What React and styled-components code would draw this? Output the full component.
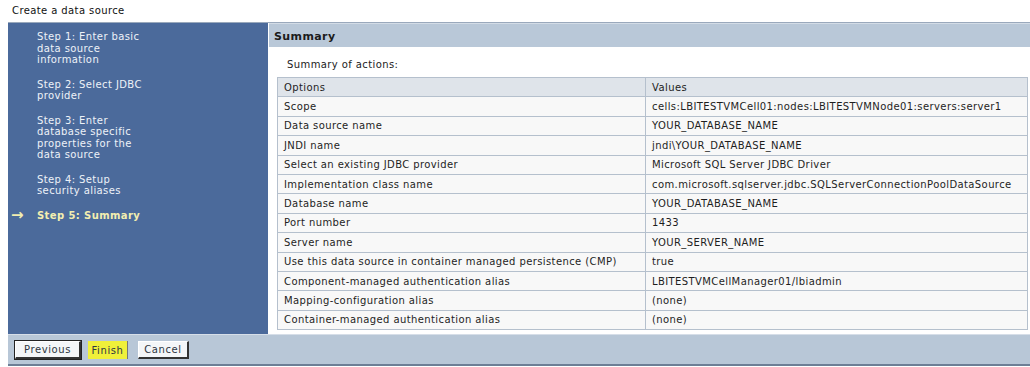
import React from "react";
import styled, { createGlobalStyle } from "styled-components";

const Global = createGlobalStyle`
  html, body { margin: 0; padding: 0; background: #ffffff; }
  body { font-family: "DejaVu Sans", Verdana, sans-serif; color: #1a1a1a; letter-spacing: 0.4px; }
  * { box-sizing: border-box; }
`;

const Page = styled.div`
  width: 1030px;
  height: 367px;
  overflow: hidden;
  padding: 0 0 0 8px;
`;

const Title = styled.div`
  font-size: 10px;
  height: 22px;
  line-height: 22px;
  padding-left: 4px;
  color: #111;
`;

const Frame = styled.div`
  width: 1024px;
  display: grid;
  grid-template-columns: 260px 1fr;
  border-top: 1px solid #9aa9bc;
  border-bottom: 2px solid #6d7f96;
`;

const Nav = styled.div`
  background: #4b6a9b;
  padding: 8px 0 0 0;
  display: flex;
  flex-direction: column;
  gap: 13px;
`;

const Step = styled.div`
  display: grid;
  grid-template-columns: 29px 114px;
  font-size: 10px;
  line-height: 11.5px;
  color: ${(p) => (p.$active ? "#f3eeb0" : "#eef2f8")};
  font-weight: ${(p) => (p.$active ? "bold" : "normal")};
`;

const Arrow = styled.span`
  font-size: 15px;
  font-weight: bold;
  padding-left: 3px;
  line-height: 11px;
  color: #f3eeb0;
`;

const Content = styled.div`
  background: #ffffff;
  padding-left: 1px;
  padding-bottom: 4px;
`;

const Header = styled.div`
  background: #b9c8d8;
  height: 24px;
  line-height: 26px;
  font-size: 11px;
  font-weight: bold;
  padding-left: 5px;
  color: #1b1b1b;
  border-top: 1px solid #d3dce6;
`;

const Caption = styled.div`
  font-size: 10px;
  padding: 12px 0 0 18px;
  height: 30px;
  color: #222;
`;

const Table = styled.table`
  margin-left: 8px;
  width: 751px;
  border-collapse: collapse;
  font-size: 10px;
  border: 1px solid #a6b3c4;
`;

const Row = styled.tr`
  background: ${(p) => (p.$head ? "#dfe4ea" : "#f8f8f8")};
`;

const Cell = styled.td`
  height: 19.4px;
  padding: 0 6px;
  border: 1px solid #b5c0cd;
  white-space: nowrap;
  width: ${(p) => p.$w || "auto"};
  color: #1e1e1e;
`;

const Footer = styled.div`
  grid-column: 1 / span 2;
  background: #b8c7d7;
  height: 30px;
  display: flex;
  align-items: center;
  gap: 7px;
  padding-left: 7px;
  padding-top: 1px;
  border-top: 1px solid #d6dee8;
`;

const Button = styled.button`
  font-family: "DejaVu Sans", Verdana, sans-serif;
  font-size: 10px;
  height: 18px;
  width: ${(p) => p.$w}px;
  padding: 0;
  margin-right: ${(p) => p.$mr || 0}px;
  background: ${(p) => (p.$highlight ? "#f0f03a" : "#f4f6f8")};
  border-top: ${(p) => (p.$highlight ? "none" : "1px solid #ffffff")};
  border-left: ${(p) => (p.$highlight ? "none" : "1px solid #ffffff")};
  border-right: ${(p) => (p.$highlight ? "1px solid #777" : "2px solid #333")};
  border-bottom: ${(p) => (p.$highlight ? "none" : "2px solid #333")};
  outline: ${(p) => (p.$strong ? "1px solid #222" : "none")};
  color: #2e3742;
  letter-spacing: 0.6px;
  cursor: pointer;
`;

const steps = [
  "Step 1: Enter basic data source information",
  "Step 2: Select JDBC provider",
  "Step 3: Enter database specific properties for the data source",
  "Step 4: Setup security aliases",
];

const rows = [
  ["Scope", "cells:LBITESTVMCell01:nodes:LBITESTVMNode01:servers:server1"],
  ["Data source name", "YOUR_DATABASE_NAME"],
  ["JNDI name", "jndi\\YOUR_DATABASE_NAME"],
  ["Select an existing JDBC provider", "Microsoft SQL Server JDBC Driver"],
  ["Implementation class name", "com.microsoft.sqlserver.jdbc.SQLServerConnectionPoolDataSource"],
  ["Database name", "YOUR_DATABASE_NAME"],
  ["Port number", "1433"],
  ["Server name", "YOUR_SERVER_NAME"],
  ["Use this data source in container managed persistence (CMP)", "true"],
  ["Component-managed authentication alias", "LBITESTVMCellManager01/lbiadmin"],
  ["Mapping-configuration alias", "(none)"],
  ["Container-managed authentication alias", "(none)"],
];

export default function App() {
  return (
    <Page>
      <Global />
      <Title>Create a data source</Title>
      <Frame>
        <Nav>
          {steps.map((s) => (
            <Step key={s}>
              <span />
              <span>{s}</span>
            </Step>
          ))}
          <Step $active>
            <Arrow>→</Arrow>
            <span>Step 5: Summary</span>
          </Step>
        </Nav>
        <Content>
          <Header>Summary</Header>
          <Caption>Summary of actions:</Caption>
          <Table>
            <tbody>
              <Row $head>
                <Cell $w="368px">Options</Cell>
                <Cell>Values</Cell>
              </Row>
              {rows.map(([k, v]) => (
                <Row key={k}>
                  <Cell>{k}</Cell>
                  <Cell>{v}</Cell>
                </Row>
              ))}
            </tbody>
          </Table>
        </Content>
        <Footer>
          <Button $strong $w={66}>Previous</Button>
          <Button $highlight $w={40} $mr={3}>Finish</Button>
          <Button $w={51}>Cancel</Button>
        </Footer>
      </Frame>
    </Page>
  );
}
